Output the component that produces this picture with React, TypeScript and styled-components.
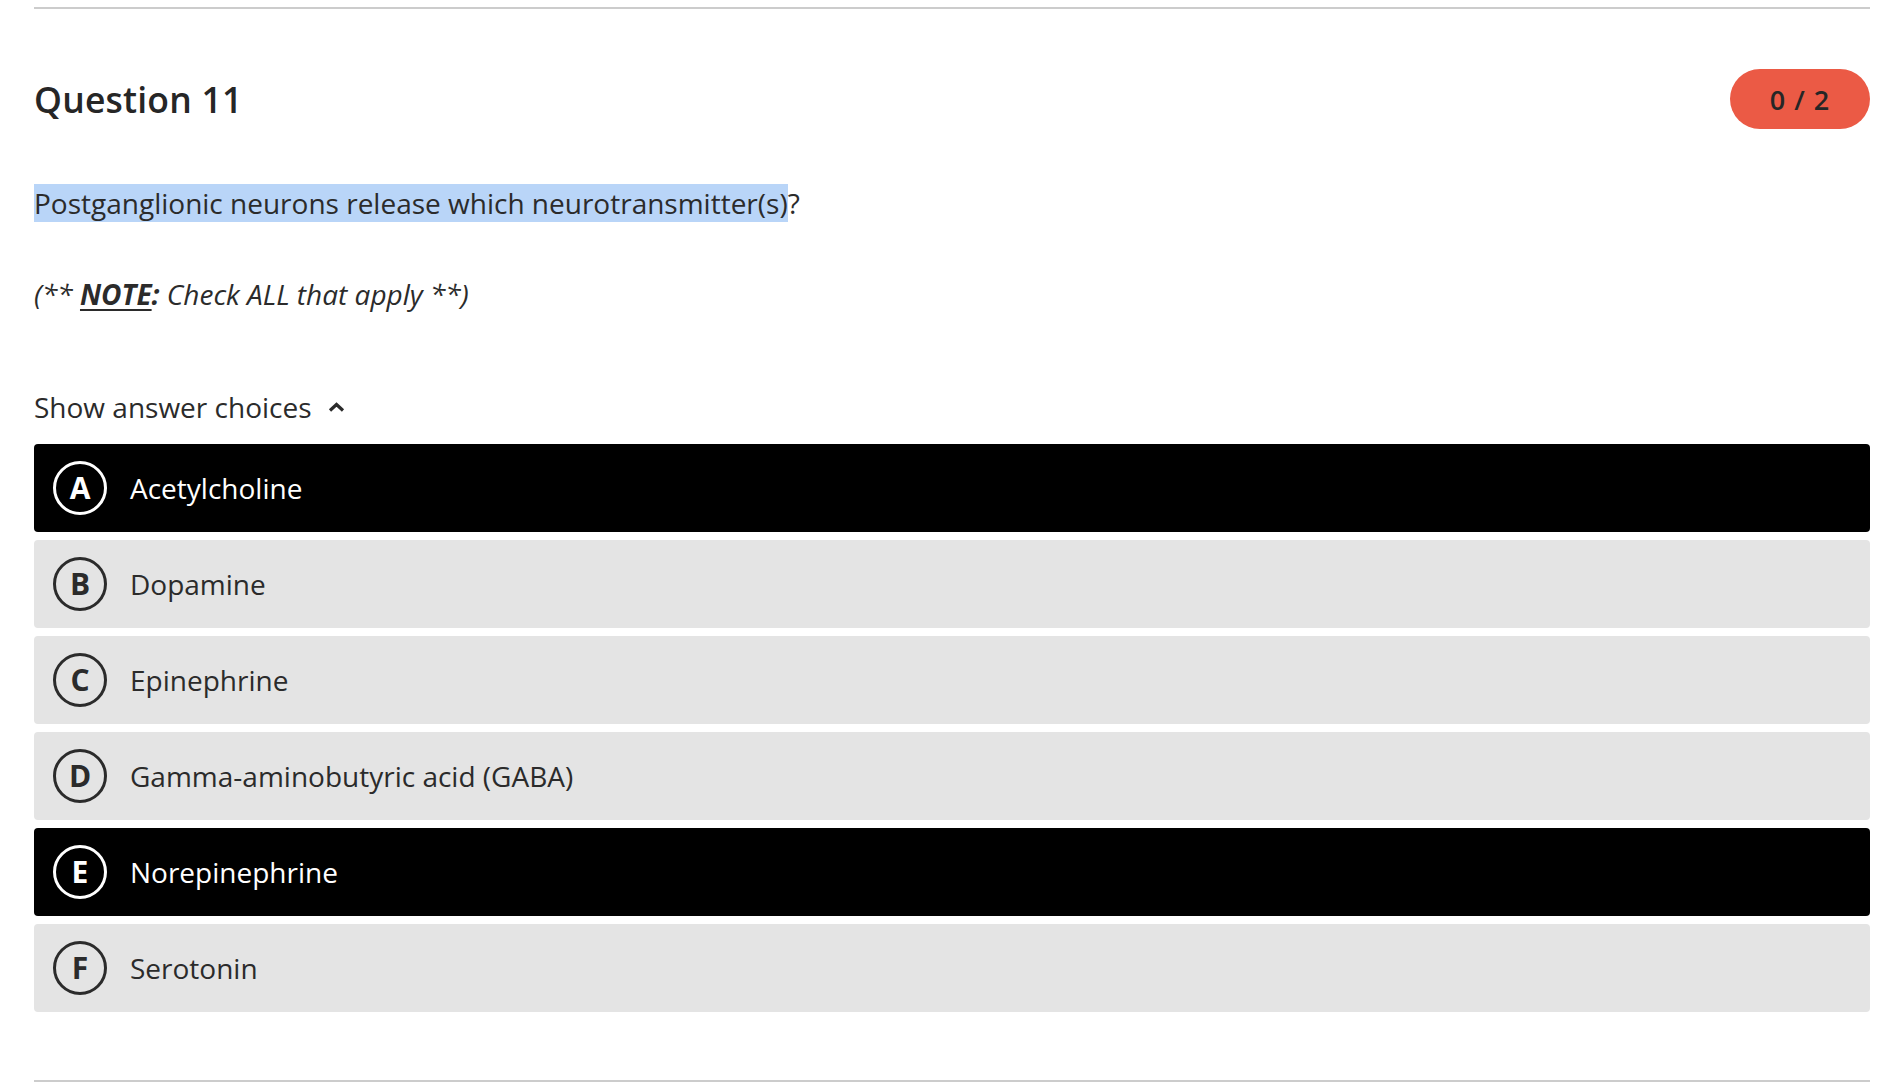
import React from "react";
import styled, { createGlobalStyle } from "styled-components";

const Global = createGlobalStyle`
  html, body { margin: 0; padding: 0; background: #fff; }
  body { font-family: "Open Sans", "Noto Sans", sans-serif; color: #2b2b2b; }
`;

const Page = styled.div`
  padding: 7px 31px 0 34px;
`;

const Card = styled.section`
  border-top: 2px solid #cccccc;
  border-bottom: 2px solid #cccccc;
  padding: 60px 0 68px;
`;

const Header = styled.div`
  display: flex;
  align-items: center;
  justify-content: space-between;
  height: 60px;
`;

const Title = styled.h2`
  margin: 0;
  font-size: 35.5px;
  font-weight: 600;
  color: #262626;
  letter-spacing: 0.2px;
`;

const Badge = styled.div`
  width: 140px;
  height: 60px;
  border-radius: 30px;
  background: #eb5a45;
  color: #262626;
  font-size: 27px;
  font-weight: 600;
  display: flex;
  align-items: center;
  justify-content: center;
  letter-spacing: 1px;
`;

const Prompt = styled.p`
  margin: 52px 0 0;
  font-size: 28px;
  line-height: 44px;
`;

const Highlight = styled.span`
  background: #b9d5f8;
`;

const Note = styled.p`
  margin: 47px 0 0;
  font-size: 28px;
  line-height: 44px;
  font-style: italic;
`;

const NoteStrong = styled.strong`
  font-weight: 700;
  text-decoration: underline;
  text-underline-offset: 4px;
`;

const Toggle = styled.div`
  margin-top: 71px;
  display: flex;
  align-items: center;
  gap: 16px;
  font-size: 28px;
  line-height: 40px;
  height: 40px;
`;

const Choices = styled.div`
  margin-top: 17px;
  display: flex;
  flex-direction: column;
  gap: 8px;
`;

const Choice = styled.div<{ $selected?: boolean }>`
  height: 88px;
  border-radius: 4px;
  display: flex;
  align-items: center;
  padding-left: 19px;
  gap: 23px;
  background: ${(p) => (p.$selected ? "#000" : "#e4e4e4")};
  color: ${(p) => (p.$selected ? "#fff" : "#2b2b2b")};
`;

const Letter = styled.div<{ $selected?: boolean }>`
  width: 48px;
  height: 48px;
  border-radius: 50%;
  border: 3.5px solid ${(p) => (p.$selected ? "#fff" : "#2b2b2b")};
  display: flex;
  align-items: center;
  justify-content: center;
  font-size: 30px;
  font-weight: 700;
  line-height: 1;
`;

const Label = styled.span`
  font-size: 28px;
`;

const choices = [
  { l: "A", t: "Acetylcholine", s: true },
  { l: "B", t: "Dopamine", s: false },
  { l: "C", t: "Epinephrine", s: false },
  { l: "D", t: "Gamma-aminobutyric acid (GABA)", s: false },
  { l: "E", t: "Norepinephrine", s: true },
  { l: "F", t: "Serotonin", s: false },
];

export default function App() {
  return (
    <Page>
      <Global />
      <Card>
        <Header>
          <Title>Question 11</Title>
          <Badge>0 / 2</Badge>
        </Header>
        <Prompt>
          <Highlight>Postganglionic neurons release which neurotransmitter(s)</Highlight>?
        </Prompt>
        <Note>
          (** <NoteStrong>NOTE</NoteStrong>
          <strong>:</strong> Check ALL that apply **)
        </Note>
        <Toggle>
          Show answer choices
          <svg width="17" height="10" viewBox="0 0 17 10">
            <path d="M2 8.5 L8.5 2.5 L15 8.5" fill="none" stroke="#2b2b2b" strokeWidth="3.2" />
          </svg>
        </Toggle>
        <Choices>
          {choices.map((c) => (
            <Choice key={c.l} $selected={c.s}>
              <Letter $selected={c.s}>{c.l}</Letter>
              <Label>{c.t}</Label>
            </Choice>
          ))}
        </Choices>
      </Card>
    </Page>
  );
}
